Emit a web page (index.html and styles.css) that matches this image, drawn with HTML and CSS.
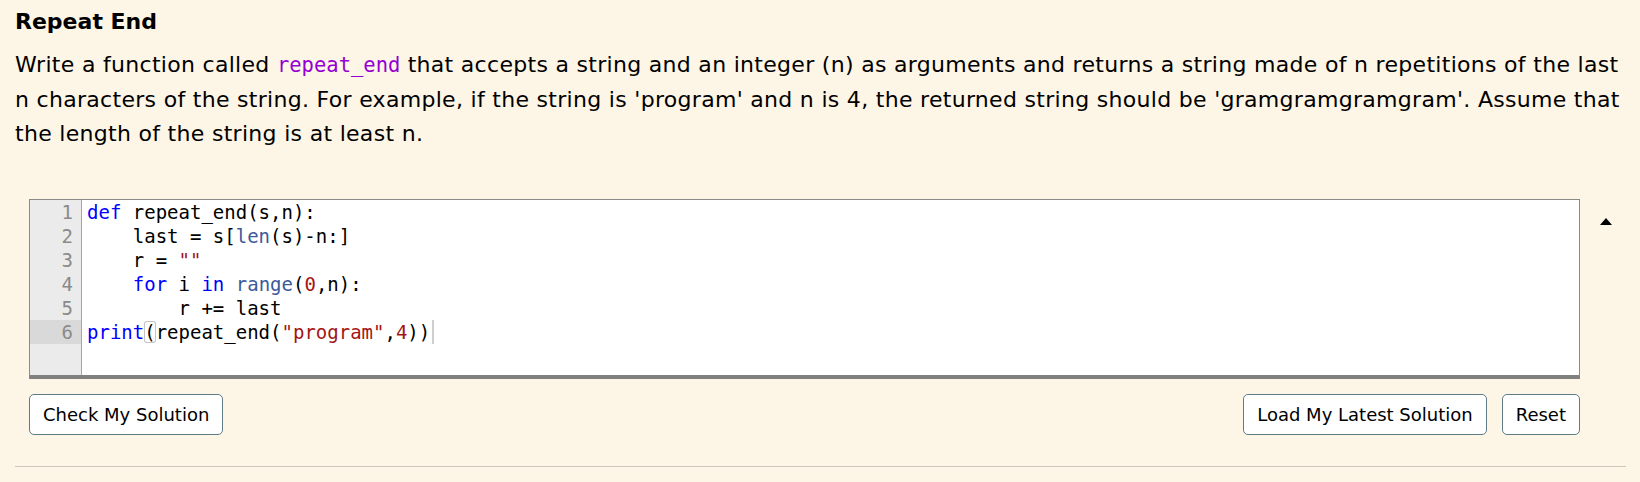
FILE: index.html
```html
<!DOCTYPE html>
<html lang="en">
<head>
<meta charset="utf-8">
<title>Repeat End</title>
<link rel="stylesheet" href="styles.css">
</head>
<body>
<div class="page">
  <h2 class="title">Repeat End</h2>
  <p class="desc">Write a function called <code class="inline-code">repeat_end</code> that accepts a string and an integer (n) as arguments and returns a string made of n repetitions of the last n characters of the string. For example, if the string is 'program' and n is 4, the returned string should be 'gramgramgramgram'. Assume that the length of the string is at least n.</p>
  <div class="exercise">
    <div class="editor-row">
      <div class="editor">
        <div class="gutter">
          <div class="ln">1</div>
          <div class="ln">2</div>
          <div class="ln">3</div>
          <div class="ln">4</div>
          <div class="ln">5</div>
          <div class="ln active">6</div>
        </div>
        <div class="code">
          <div class="line"><span class="kw">def</span> repeat_end(s,n):</div>
          <div class="line">    last = s[<span class="fn">len</span>(s)-n:]</div>
          <div class="line">    r = <span class="str">""</span></div>
          <div class="line">    <span class="kw">for</span> i <span class="kw">in</span> <span class="fn">range</span>(<span class="num">0</span>,n):</div>
          <div class="line">        r += last</div>
          <div class="line"><span class="kw">print</span><span class="bracket">(</span>repeat_end(<span class="str">"program"</span>,<span class="num">4</span>))<span class="cursor"></span></div>
        </div>
      </div>
      <div class="toggle"><span class="tri"></span></div>
    </div>
    <div class="controls">
      <button class="btn">Check My Solution</button>
      <div class="spacer"></div>
      <button class="btn">Load My Latest Solution</button>
      <button class="btn">Reset</button>
    </div>
  </div>
  <hr class="rule">
</div>
</body>
</html>
```
FILE: styles.css
```css
html, body {
  margin: 0;
  padding: 0;
  background: #fdf5e6;
}

body {
  font-family: "DejaVu Sans", Verdana, sans-serif;
  color: #000;
}

.page {
  padding: 0 14px 0 15px;
}

.title {
  margin: 9px 0 0;
  font-size: 22px;
  line-height: 26px;
  font-weight: bold;
}

.desc {
  margin: 13px 0 0;
  font-size: 22px;
  line-height: 34.5px;
  letter-spacing: 0.3px;
}

.inline-code {
  font-family: "DejaVu Sans Mono", "Liberation Mono", monospace;
  font-size: 20.5px;
  letter-spacing: 0;
  color: #9400d3;
}

.exercise {
  margin-top: 47px;
  padding-left: 14px;
}

.editor-row {
  display: flex;
}

.editor {
  flex: 1;
  display: flex;
  height: 175px;
  border: 1px solid #8a8a8a;
  border-bottom: 4px solid #808080;
  background: #fff;
  font-family: "DejaVu Sans Mono", "Liberation Mono", monospace;
  font-size: 19px;
  line-height: 24px;
}

.gutter {
  width: 51px;
  background: #ebebeb;
  border-right: 1px solid #a6a6a6;
  color: #8a8a8a;
  text-align: right;
}

.ln {
  padding-right: 8px;
  height: 24px;
}

.ln.active {
  background: #d9d9d9;
}

.code {
  flex: 1;
  padding-left: 5px;
  color: #000;
}

.line {
  height: 24px;
  white-space: pre;
}

.kw { color: #0000ff; }
.fn { color: #3c5a9a; }
.str { color: #a31515; }
.num { color: #a31515; }

.bracket {
  box-shadow: inset 0 0 0 1px #c4c4c4;
  border-radius: 3px;
}

.cursor {
  display: inline-block;
  width: 2px;
  height: 24px;
  margin-left: 2px;
  vertical-align: top;
  background: #cfcfcf;
}

.toggle {
  width: 26px;
  padding: 19px 0 0 20px;
}

.tri {
  display: block;
  width: 0;
  height: 0;
  border-left: 6.5px solid transparent;
  border-right: 6.5px solid transparent;
  border-bottom: 7px solid #000;
}

.controls {
  display: flex;
  gap: 15px;
  margin-top: 15px;
  padding-right: 46px;
}

.spacer {
  flex: 1;
}

.btn {
  font-family: "DejaVu Sans", Verdana, sans-serif;
  font-size: 18px;
  line-height: 21px;
  padding: 9px 13px;
  background: #fff;
  color: #000;
  border: 1px solid #5f7b86;
  border-radius: 5px;
  margin: 0;
}

.rule {
  margin: 31px 0 0;
  border: 0;
  border-top: 1px solid #cdc8bf;
  height: 0;
}
```
